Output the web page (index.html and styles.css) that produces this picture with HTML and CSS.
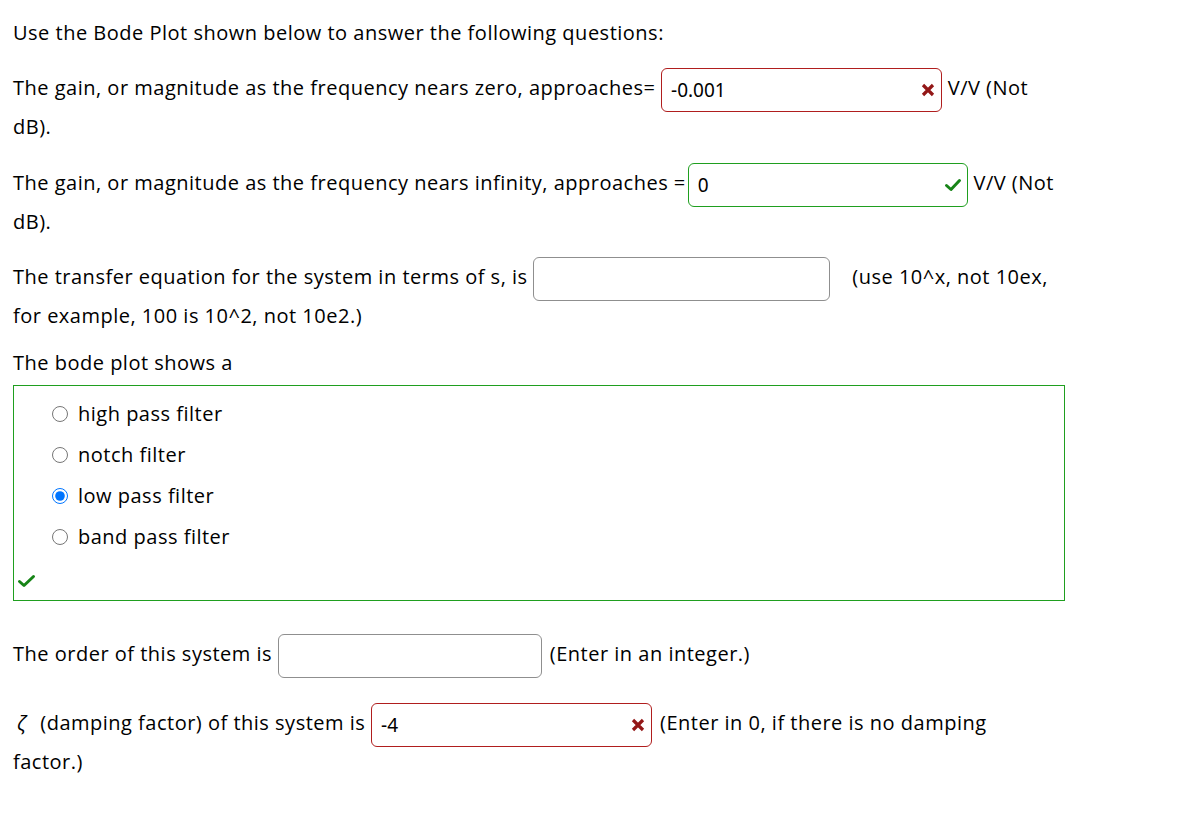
FILE: index.html
```html
<!DOCTYPE html>
<html lang="en">
<head>
<meta charset="utf-8">
<title>Bode Plot Questions</title>
<link rel="stylesheet" href="styles.css">
</head>
<body>
<div class="page">
  <p class="intro">Use the Bode Plot shown below to answer the following questions:</p>

  <p class="q q-zero">The gain, or magnitude as the frequency nears zero, approaches= <span class="field wrong w-zero"><input type="text" value="-0.001"><svg class="mark" viewBox="0 0 16 16" width="16" height="16"><path d="M3 3 L13 13 M13 3 L3 13" stroke="#931717" stroke-width="3.2" fill="none"/></svg></span> V/V (Not dB).</p>

  <p class="q q-inf">The gain, or magnitude as the frequency nears infinity, approaches =<span class="field right w-inf"><input type="text" value="0"><svg class="mark" viewBox="0 0 18 16" width="18" height="16"><path d="M2.5 8.5 L7 12.5 L15.5 3.5" stroke="#178417" stroke-width="3" stroke-linecap="round" stroke-linejoin="round" fill="none"/></svg></span> V/V (Not dB).</p>

  <p class="q q-tf">The transfer equation for the system in terms of s, is <span class="field plain w-tf"><input type="text" value=""></span><span class="gap"></span>(use 10^x, not 10ex, for example, 100 is 10^2, not 10e2.)</p>

  <p class="lead">The bode plot shows a</p>

  <div class="choices">
    <label class="opt"><input type="radio" name="filter"> high pass filter</label>
    <label class="opt"><input type="radio" name="filter"> notch filter</label>
    <label class="opt"><input type="radio" name="filter" checked> low pass filter</label>
    <label class="opt"><input type="radio" name="filter"> band pass filter</label>
    <div class="choice-mark"><svg viewBox="0 0 20 16" width="20" height="16"><path d="M2.5 8.5 L7 12.5 L16.5 3.5" stroke="#178417" stroke-width="3" stroke-linecap="round" stroke-linejoin="round" fill="none"/></svg></div>
  </div>

  <p class="q q-order">The order of this system is <span class="field plain w-order"><input type="text" value=""></span><span class="gap-s"></span>(Enter in an integer.)</p>

  <p class="q q-zeta"><span class="zeta">ζ</span> (damping factor) of this system is <span class="field wrong w-zeta"><input type="text" value="-4"><svg class="mark" viewBox="0 0 16 16" width="16" height="16"><path d="M3 3 L13 13 M13 3 L3 13" stroke="#931717" stroke-width="3.2" fill="none"/></svg></span><span class="gap-s"></span>(Enter in 0, if there is no damping factor.)</p>
</div>
</body>
</html>
```
FILE: styles.css
```css
html, body {
  margin: 0;
  padding: 0;
  background: #fff;
}

.page {
  width: 1052px;
  padding: 18px 0 0 13px;
  font-family: "Open Sans", "Noto Sans", sans-serif;
  font-size: 20px;
  letter-spacing: 0.5px;
  line-height: 30px;
  color: #000;
}

p {
  margin: 0;
  padding-right: 7px;
}

.intro {
  margin-bottom: 20px;
}

.q-zero {
  margin-bottom: 21px;
}

.q-inf {
  margin-bottom: 20px;
}

.lead {
  margin-top: 17px;
  margin-bottom: 7px;
}

.field {
  display: inline-flex;
  align-items: center;
  box-sizing: border-box;
  height: 44px;
  border: 1px solid #8f8f8f;
  border-radius: 6px;
  vertical-align: middle;
  background: #fff;
  letter-spacing: 0;
}

.field.wrong {
  border-color: #b01e1e;
}

.field.right {
  border-color: #1f9f1f;
}

.field input {
  flex: 1;
  min-width: 0;
  height: 100%;
  border: none;
  outline: none;
  background: transparent;
  padding: 0 0 0 9px;
  margin: 0;
  font-family: "Noto Sans", "Open Sans", sans-serif;
  font-size: 19px;
  color: #000;
}

.field .mark {
  flex: none;
  margin-right: 5px;
}

.w-zero { width: 281px; }
.w-inf { width: 280px; margin-left: 2px; }
.w-tf { width: 297px; }
.w-order { width: 264px; }
.w-zeta { width: 281px; }

.gap {
  display: inline-block;
  width: 22px;
}

.gap-s {
  display: inline-block;
  width: 8px;
}

.choices {
  border: 1px solid #1f9f1f;
  padding: 7px 0 7px 3px;
}

.opt {
  display: flex;
  align-items: center;
  height: 41px;
  padding-left: 35px;
  gap: 10px;
}

.opt input {
  width: 16px;
  height: 16px;
  margin: 0;
}

.choice-mark {
  height: 24px;
  margin-top: 12px;
  display: flex;
  align-items: center;
}

.q-order {
  margin-top: 33px;
  margin-bottom: 25px;
}

.zeta {
  display: inline-block;
  margin-left: 4px;
  margin-right: 8px;
  font-style: italic;
}
```
